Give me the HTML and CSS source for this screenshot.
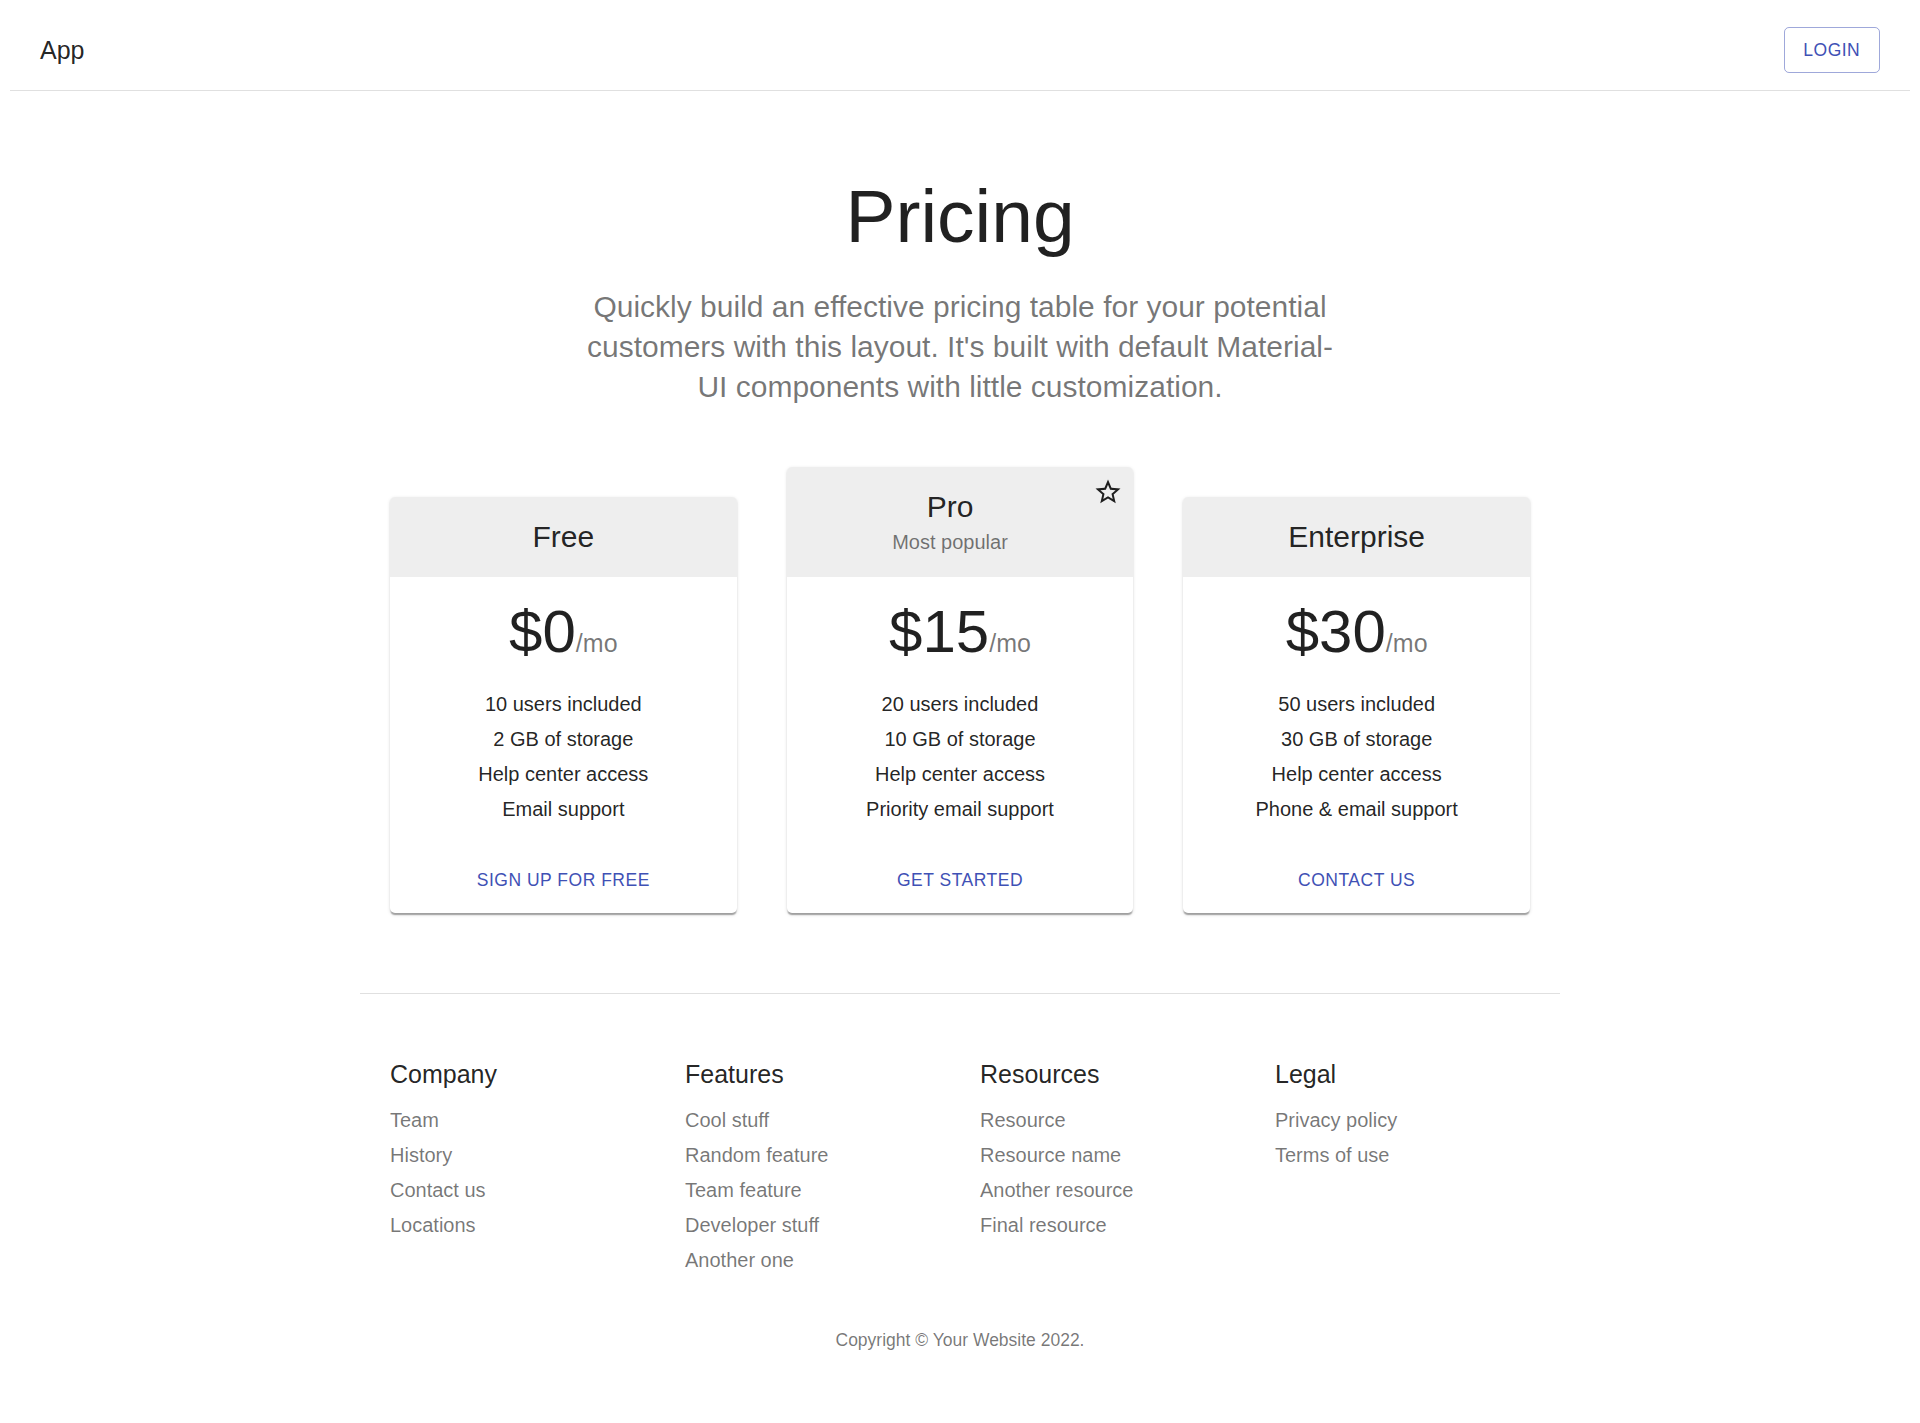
FILE: index.html
```html
<!DOCTYPE html>
<html lang="en">
<head>
<meta charset="utf-8">
<title>Pricing</title>
<link rel="stylesheet" href="styles.css">
</head>
<body>
<header class="appbar">
  <div class="brand">App</div>
  <a class="login-btn" href="#">Login</a>
</header>

<main class="hero">
  <h1 class="hero-title">Pricing</h1>
  <p class="hero-lead">Quickly build an effective pricing table for your potential customers with this layout. It's built with default Material-UI components with little customization.</p>
</main>

<section class="plans">
  <div class="card">
    <div class="card-head">
      <div class="card-head-content">
        <div class="card-title">Free</div>
      </div>
    </div>
    <div class="card-body">
      <div class="price"><span class="amount">$0</span><span class="per">/mo</span></div>
      <ul class="features">
        <li>10 users included</li>
        <li>2 GB of storage</li>
        <li>Help center access</li>
        <li>Email support</li>
      </ul>
    </div>
    <div class="card-actions"><button class="card-btn">Sign up for free</button></div>
  </div>

  <div class="card">
    <div class="card-head">
      <div class="card-head-content">
        <div class="card-title">Pro</div>
        <div class="card-sub">Most popular</div>
      </div>
      <div class="card-action">
        <svg viewBox="0 0 24 24" width="30" height="30" aria-hidden="true"><path d="M22 9.24l-7.19-.62L12 2 9.19 8.63 2 9.24l5.46 4.73L5.82 21 12 17.27 18.18 21l-1.63-7.03L22 9.24zM12 15.4l-3.76 2.27 1-4.28-3.32-2.88 4.38-.38L12 6.1l1.71 4.04 4.38.38-3.32 2.88 1 4.28L12 15.4z"/></svg>
      </div>
    </div>
    <div class="card-body">
      <div class="price"><span class="amount">$15</span><span class="per">/mo</span></div>
      <ul class="features">
        <li>20 users included</li>
        <li>10 GB of storage</li>
        <li>Help center access</li>
        <li>Priority email support</li>
      </ul>
    </div>
    <div class="card-actions"><button class="card-btn">Get started</button></div>
  </div>

  <div class="card">
    <div class="card-head">
      <div class="card-head-content">
        <div class="card-title">Enterprise</div>
      </div>
    </div>
    <div class="card-body">
      <div class="price"><span class="amount">$30</span><span class="per">/mo</span></div>
      <ul class="features">
        <li>50 users included</li>
        <li>30 GB of storage</li>
        <li>Help center access</li>
        <li>Phone &amp; email support</li>
      </ul>
    </div>
    <div class="card-actions"><button class="card-btn">Contact us</button></div>
  </div>
</section>

<footer class="footer">
  <div class="footer-grid">
    <div class="footer-col">
      <h6 class="footer-head">Company</h6>
      <ul class="footer-links">
        <li><a href="#">Team</a></li>
        <li><a href="#">History</a></li>
        <li><a href="#">Contact us</a></li>
        <li><a href="#">Locations</a></li>
      </ul>
    </div>
    <div class="footer-col">
      <h6 class="footer-head">Features</h6>
      <ul class="footer-links">
        <li><a href="#">Cool stuff</a></li>
        <li><a href="#">Random feature</a></li>
        <li><a href="#">Team feature</a></li>
        <li><a href="#">Developer stuff</a></li>
        <li><a href="#">Another one</a></li>
      </ul>
    </div>
    <div class="footer-col">
      <h6 class="footer-head">Resources</h6>
      <ul class="footer-links">
        <li><a href="#">Resource</a></li>
        <li><a href="#">Resource name</a></li>
        <li><a href="#">Another resource</a></li>
        <li><a href="#">Final resource</a></li>
      </ul>
    </div>
    <div class="footer-col">
      <h6 class="footer-head">Legal</h6>
      <ul class="footer-links">
        <li><a href="#">Privacy policy</a></li>
        <li><a href="#">Terms of use</a></li>
      </ul>
    </div>
  </div>
  <p class="copyright">Copyright © <a href="#">Your Website</a> 2022.</p>
</footer>
</body>
</html>
```

FILE: styles.css
```css
* { box-sizing: border-box; }

body {
  margin: 10px;
  font-family: "Liberation Sans", Arial, Helvetica, sans-serif;
  color: rgba(0, 0, 0, 0.87);
  background: #fff;
}

.appbar {
  display: flex;
  align-items: center;
  height: 81px;
  padding: 0 30px;
  border-bottom: 1px solid rgba(0, 0, 0, 0.12);
  background: #fff;
}

.brand {
  flex: 1;
  font-size: 25px;
  line-height: 1.6;
  color: rgba(0, 0, 0, 0.87);
}

.login-btn {
  display: inline-block;
  padding: 6.25px 18.75px;
  border: 1px solid rgba(63, 81, 181, 0.5);
  border-radius: 5px;
  color: #3f51b5;
  font-size: 17.5px;
  line-height: 1.75;
  letter-spacing: 0.02857em;
  text-transform: uppercase;
  text-decoration: none;
}

.hero {
  max-width: 750px;
  margin: 0 auto;
  padding: 80px 0 60px;
  text-align: center;
}

.hero-title {
  margin: 0 0 26.25px;
  font-size: 75px;
  line-height: 1.2;
  font-weight: 400;
  color: rgba(0, 0, 0, 0.87);
}

.hero-lead {
  margin: 0;
  font-size: 30px;
  line-height: 1.334;
  color: rgba(0, 0, 0, 0.54);
}

.plans {
  max-width: 1200px;
  margin: 0 auto;
  padding: 0 30px;
  display: grid;
  grid-template-columns: repeat(3, 1fr);
  gap: 50px;
  align-items: end;
}

.card {
  background: #fff;
  border-radius: 5px;
  overflow: hidden;
  box-shadow: 0 2.5px 1.25px -1.25px rgba(0, 0, 0, 0.2),
              0 1.25px 1.25px 0 rgba(0, 0, 0, 0.14),
              0 1.25px 3.75px 0 rgba(0, 0, 0, 0.12);
}

.card-head {
  display: flex;
  align-items: center;
  padding: 20px;
  background: #eeeeee;
}

.card-head-content {
  flex: 1 1 auto;
  text-align: center;
}

.card-title {
  font-size: 30px;
  line-height: 1.334;
  color: rgba(0, 0, 0, 0.87);
}

.card-sub {
  font-size: 20px;
  line-height: 1.5;
  color: rgba(0, 0, 0, 0.54);
}

.card-action {
  flex: 0 0 auto;
  align-self: flex-start;
  margin: -10px -10px 0 0;
  width: 30px;
  height: 30px;
}

.card-action svg {
  display: block;
  fill: rgba(0, 0, 0, 0.87);
}

.card-body {
  padding: 20px;
}

.price {
  display: flex;
  justify-content: center;
  align-items: baseline;
  margin-bottom: 20px;
}

.amount {
  font-size: 60px;
  line-height: 1.167;
  color: rgba(0, 0, 0, 0.87);
}

.per {
  font-size: 25px;
  line-height: 1.6;
  color: rgba(0, 0, 0, 0.54);
}

.features {
  list-style: none;
  margin: 0;
  padding: 0;
}

.features li {
  font-size: 20px;
  line-height: 1.75;
  text-align: center;
  color: rgba(0, 0, 0, 0.87);
}

.card-actions {
  display: flex;
  padding: 10px;
}

.card-btn {
  width: 100%;
  padding: 7.5px 10px;
  border: 0;
  border-radius: 5px;
  background: none;
  font-family: inherit;
  font-size: 17.5px;
  line-height: 1.75;
  letter-spacing: 0.02857em;
  text-transform: uppercase;
  color: #3f51b5;
  cursor: pointer;
}

.footer {
  max-width: 1200px;
  margin: 80px auto 0;
  padding: 60px 30px;
  border-top: 1px solid rgba(0, 0, 0, 0.12);
}

.footer-grid {
  display: grid;
  grid-template-columns: repeat(4, 1fr);
  column-gap: 40px;
}

.footer-head {
  margin: 0 0 8.75px;
  font-size: 25px;
  line-height: 1.6;
  font-weight: 400;
  color: rgba(0, 0, 0, 0.87);
}

.footer-links {
  list-style: none;
  margin: 0;
  padding: 0;
}

.footer-links li {
  font-size: 20px;
  line-height: 1.75;
}

.footer-links a {
  color: rgba(0, 0, 0, 0.54);
  text-decoration: none;
}

.copyright {
  margin: 50px 0 0;
  font-size: 17.5px;
  line-height: 1.43;
  text-align: center;
  color: rgba(0, 0, 0, 0.54);
}

.copyright a {
  color: inherit;
  text-decoration: none;
}
```
